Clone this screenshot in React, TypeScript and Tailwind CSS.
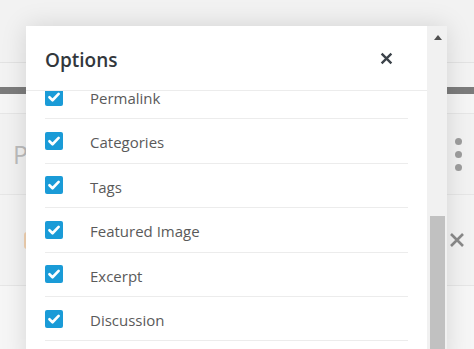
import React from "react";

const FIELDS = [
  "Permalink",
  "Categories",
  "Tags",
  "Featured Image",
  "Excerpt",
  "Discussion",
];

function Check() {
  return (
    <span className="flex h-[18px] w-[18px] shrink-0 items-center justify-center rounded-[2px] bg-[#1a9bd7]">
      <svg width="14" height="14" viewBox="0 0 16 16" fill="none">
        <path
          d="M2.8 8.3l3.5 3.4L13.3 4.4"
          stroke="#fff"
          strokeWidth="3"
          strokeLinecap="round"
          strokeLinejoin="round"
        />
      </svg>
    </span>
  );
}

// page sitting behind the modal, only edges show
function BackPage() {
  return (
    <div className="flex h-full flex-col bg-[#f1f1f1]">
      <div className="h-[63px] border-b border-[#e3e3e3] bg-[#f2f2f2]" />
      <div className="h-[24px] bg-[#f3f3f3]" />
      <div className="h-[7px] bg-[#7c7c7c]" />
      <div className="h-[20px] border-b border-[#e6e6e6] bg-[#f5f5f5]" />
      <div className="flex h-[81px] items-center justify-between border-b border-[#e6e6e6] bg-[#f2f2f2] pl-[13px] pr-[12px]">
        <span className="text-[25px] leading-none text-[#bcbcbc]">P</span>
        <div className="flex flex-col gap-[6px]">
          <span className="h-[7px] w-[7px] rounded-full bg-[#9d9d9d]" />
          <span className="h-[7px] w-[7px] rounded-full bg-[#9d9d9d]" />
          <span className="h-[7px] w-[7px] rounded-full bg-[#9d9d9d]" />
        </div>
      </div>
      <div className="flex h-[91px] items-center justify-between border-b border-[#e6e6e6] bg-[#f3f3f3] pr-[8px]">
        <span className="ml-[24px] h-[17px] w-[6px] rounded-[3px] bg-[#f3d3b2]" />
        <svg width="18" height="18" viewBox="0 0 18 18">
          <path d="M3 3l12 12M15 3L3 15" stroke="#8a8a8a" strokeWidth="2.6" />
        </svg>
      </div>
      <div className="flex-1 bg-[#f6f6f6]" />
    </div>
  );
}

export default function App() {
  return (
    <div
      className="relative h-[349px] w-[474px] overflow-hidden"
      style={{ fontFamily: '"Open Sans", "Noto Sans", sans-serif' }}
    >
      <BackPage />

      <div className="absolute left-[26px] top-[26px] flex h-[340px] w-[421px] bg-white shadow-[0_0_24px_rgba(0,0,0,0.13)]">
        <div className="flex min-w-0 flex-1 flex-col">
          <div className="flex h-[65px] shrink-0 items-center justify-between border-b border-[#ececec] pl-[19px] pr-[34px] pt-[5px]">
            <h2 className="text-[19px] font-semibold text-[#32373c]">Options</h2>
            <svg width="13" height="13" viewBox="0 0 12 12" className="mt-[-4px]">
              <path d="M1.5 1.5l9 9M10.5 1.5l-9 9" stroke="#3c434a" strokeWidth="2.2" />
            </svg>
          </div>
          <div className="flex-1 overflow-hidden px-[19px]">
            <ul className="mt-[-16px]">
              {FIELDS.map((f) => (
                <li
                  key={f}
                  className="flex h-[44.4px] items-center gap-[27px] border-b border-[#ececec]"
                >
                  <Check />
                  <span className="pt-[3px] text-[15px] text-[#5a5a5a]">{f}</span>
                </li>
              ))}
            </ul>
          </div>
        </div>

        <div className="flex w-[20px] shrink-0 flex-col bg-[#f1f1f1]">
          <div className="flex h-[22px] items-center justify-center pl-[1px]">
            <svg width="8" height="5" viewBox="0 0 8 5">
              <path d="M0 5L4 0l4 5z" fill="#505050" />
            </svg>
          </div>
          <div className="h-[168px]" />
          <div className="mx-auto w-[15px] flex-1 bg-[#c1c1c1]" />
        </div>
      </div>
    </div>
  );
}
